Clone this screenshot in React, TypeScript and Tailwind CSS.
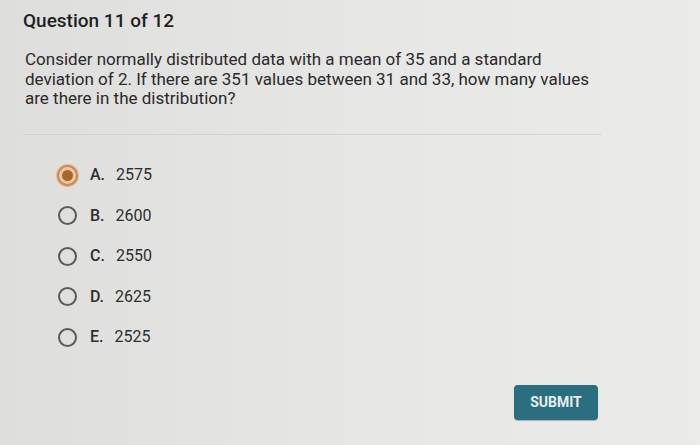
import { useState } from "react";

const options = [
  { key: "A", value: "2575" },
  { key: "B", value: "2600" },
  { key: "C", value: "2550" },
  { key: "D", value: "2625" },
  { key: "E", value: "2525" },
];

function Radio({ checked }: { checked: boolean }) {
  if (checked) {
    return (
      <span className="flex h-[21px] w-[21px] items-center justify-center rounded-full border-2 border-[#c98a55] bg-[#e9c7a4] shadow-[0_0_0_1px_#e7b98d]">
        <span className="h-[11px] w-[11px] rounded-full bg-[#a5672f]" />
      </span>
    );
  }
  return <span className="ml-[1px] h-[19px] w-[19px] rounded-full border-2 border-[#5a5a5a]" />;
}

export default function App() {
  const [selected, setSelected] = useState("A");

  return (
    <div className="h-[445px] w-[700px] overflow-hidden bg-gradient-to-r from-[#dededc] via-[#e6e6e4] to-[#ebebea] font-['Roboto',sans-serif] text-[#272727]">
      <div className="px-[23px] pt-[9px]">
        <h1 className="text-[19px] font-medium leading-[24px] text-[#1f1f1f]">Question 11 of 12</h1>
        <p className="mt-[17px] w-[578px] pl-[2px] text-[17px] leading-[19.5px] text-[#2a2a2a]">
          Consider normally distributed data with a mean of 35 and a standard deviation of 2. If there are 351
          values between 31 and 33, how many values are there in the distribution?
        </p>
        <div className="mt-[25px] w-[578px] border-t border-[#d2d2d0]" />
      </div>

      <div className="mt-[30px] flex flex-col gap-[19.5px] pl-[57px]">
        {options.map((o) => (
          <button
            key={o.key}
            onClick={() => setSelected(o.key)}
            className="flex h-[21px] items-center text-left"
          >
            <span className="flex w-[33px] items-center justify-start">
              <Radio checked={selected === o.key} />
            </span>
            <span className="text-[16px] font-medium text-[#2e2e2e]">{o.key}.</span>
            <span className="ml-[11px] text-[16px] text-[#2e2e2e]">{o.value}</span>
          </button>
        ))}
      </div>

      <div className="mt-[37px] flex justify-end pr-[102px]">
        <button className="h-[35px] w-[84px] rounded-[4px] bg-[#2b6e7f] text-[14px] font-bold text-[#e6eef0] shadow-[0_1px_1px_rgba(0,0,0,0.25)]">
          SUBMIT
        </button>
      </div>
    </div>
  );
}
